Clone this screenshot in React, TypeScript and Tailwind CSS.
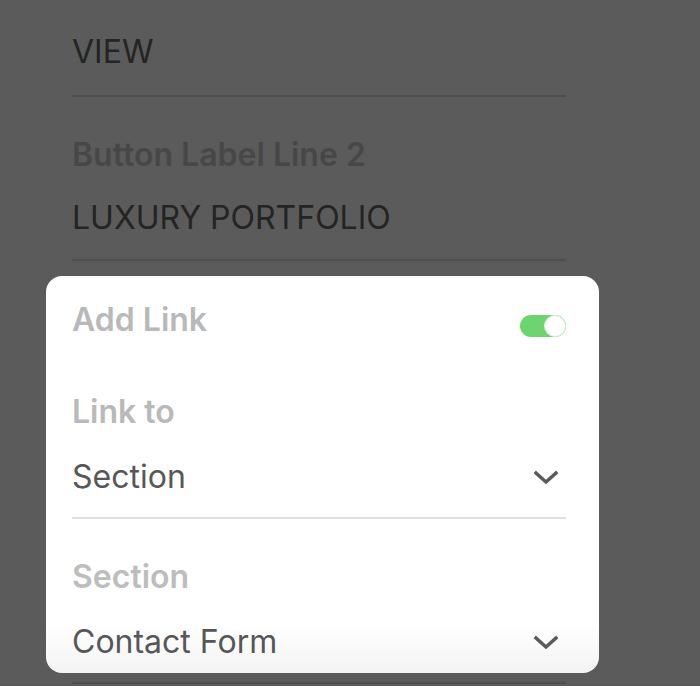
import React from 'react';

const font = { fontFamily: 'Inter, "Noto Sans", sans-serif' };

const Chevron: React.FC = () => (
  <svg width="26" height="18" viewBox="0 0 26 18" className="mr-[7px] shrink-0">
    <polyline points="3,5 13,14 23,5" fill="none" stroke="#5a5a5a" strokeWidth="3.4" strokeLinecap="square" />
  </svg>
);

const Toggle: React.FC = () => (
  <div className="relative mt-[13px] h-[22px] w-[46px] rounded-full bg-[#6dd46f]">
    <div className="absolute right-0 top-0 h-[22px] w-[22px] rounded-full border border-[#dcefdc] bg-white" />
  </div>
);

export default function App() {
  return (
    <div className="relative h-[690px] w-[700px] overflow-hidden bg-white" style={font}>
      {/* page behind the overlay */}
      <div className="ml-[72px] w-[494px] pt-[34px] text-[32px] leading-[36px]">
        <div className="text-[#666]">VIEW</div>
        <div className="mt-[25px] h-[2px] bg-[#dedede]" />
        <div className="mt-[40px] font-semibold text-[#c8c8c8]">Button Label Line 2</div>
        <div className="mt-[27px] text-[#666]">LUXURY PORTFOLIO</div>
        <div className="mt-[23px] h-[2px] bg-[#dedede]" />
        <div className="mt-[421px] h-[2px] bg-[#dedede]" />
      </div>

      {/* dim overlay */}
      <div className="absolute inset-x-0 top-0 h-[686px] bg-[rgba(0,0,0,0.643)]" />

      {/* popup card */}
      <div className="absolute left-[46px] top-[276px] w-[553px] rounded-[16px] bg-linear-to-b from-white from-88% to-[#f3f3f3] pb-[13px] pl-[26px] pr-[33px] pt-[26px] text-[32px] leading-[36px]">
        <div className="flex items-start justify-between">
          <span className="font-semibold text-[#b9b9b9]">Add Link</span>
          <Toggle />
        </div>

        <div className="mt-[56px] font-semibold text-[#b9b9b9]">Link to</div>
        <div className="mt-[29px] flex items-center justify-between">
          <span className="text-[#575757]">Section</span>
          <Chevron />
        </div>
        <div className="mt-[22px] h-[2px] bg-[#e0e0e0]" />

        <div className="mt-[40px] font-semibold text-[#bdbdbd]">Section</div>
        <div className="mt-[29px] flex items-center justify-between">
          <span className="text-[#575757]">Contact Form</span>
          <Chevron />
        </div>
      </div>
    </div>
  );
}
